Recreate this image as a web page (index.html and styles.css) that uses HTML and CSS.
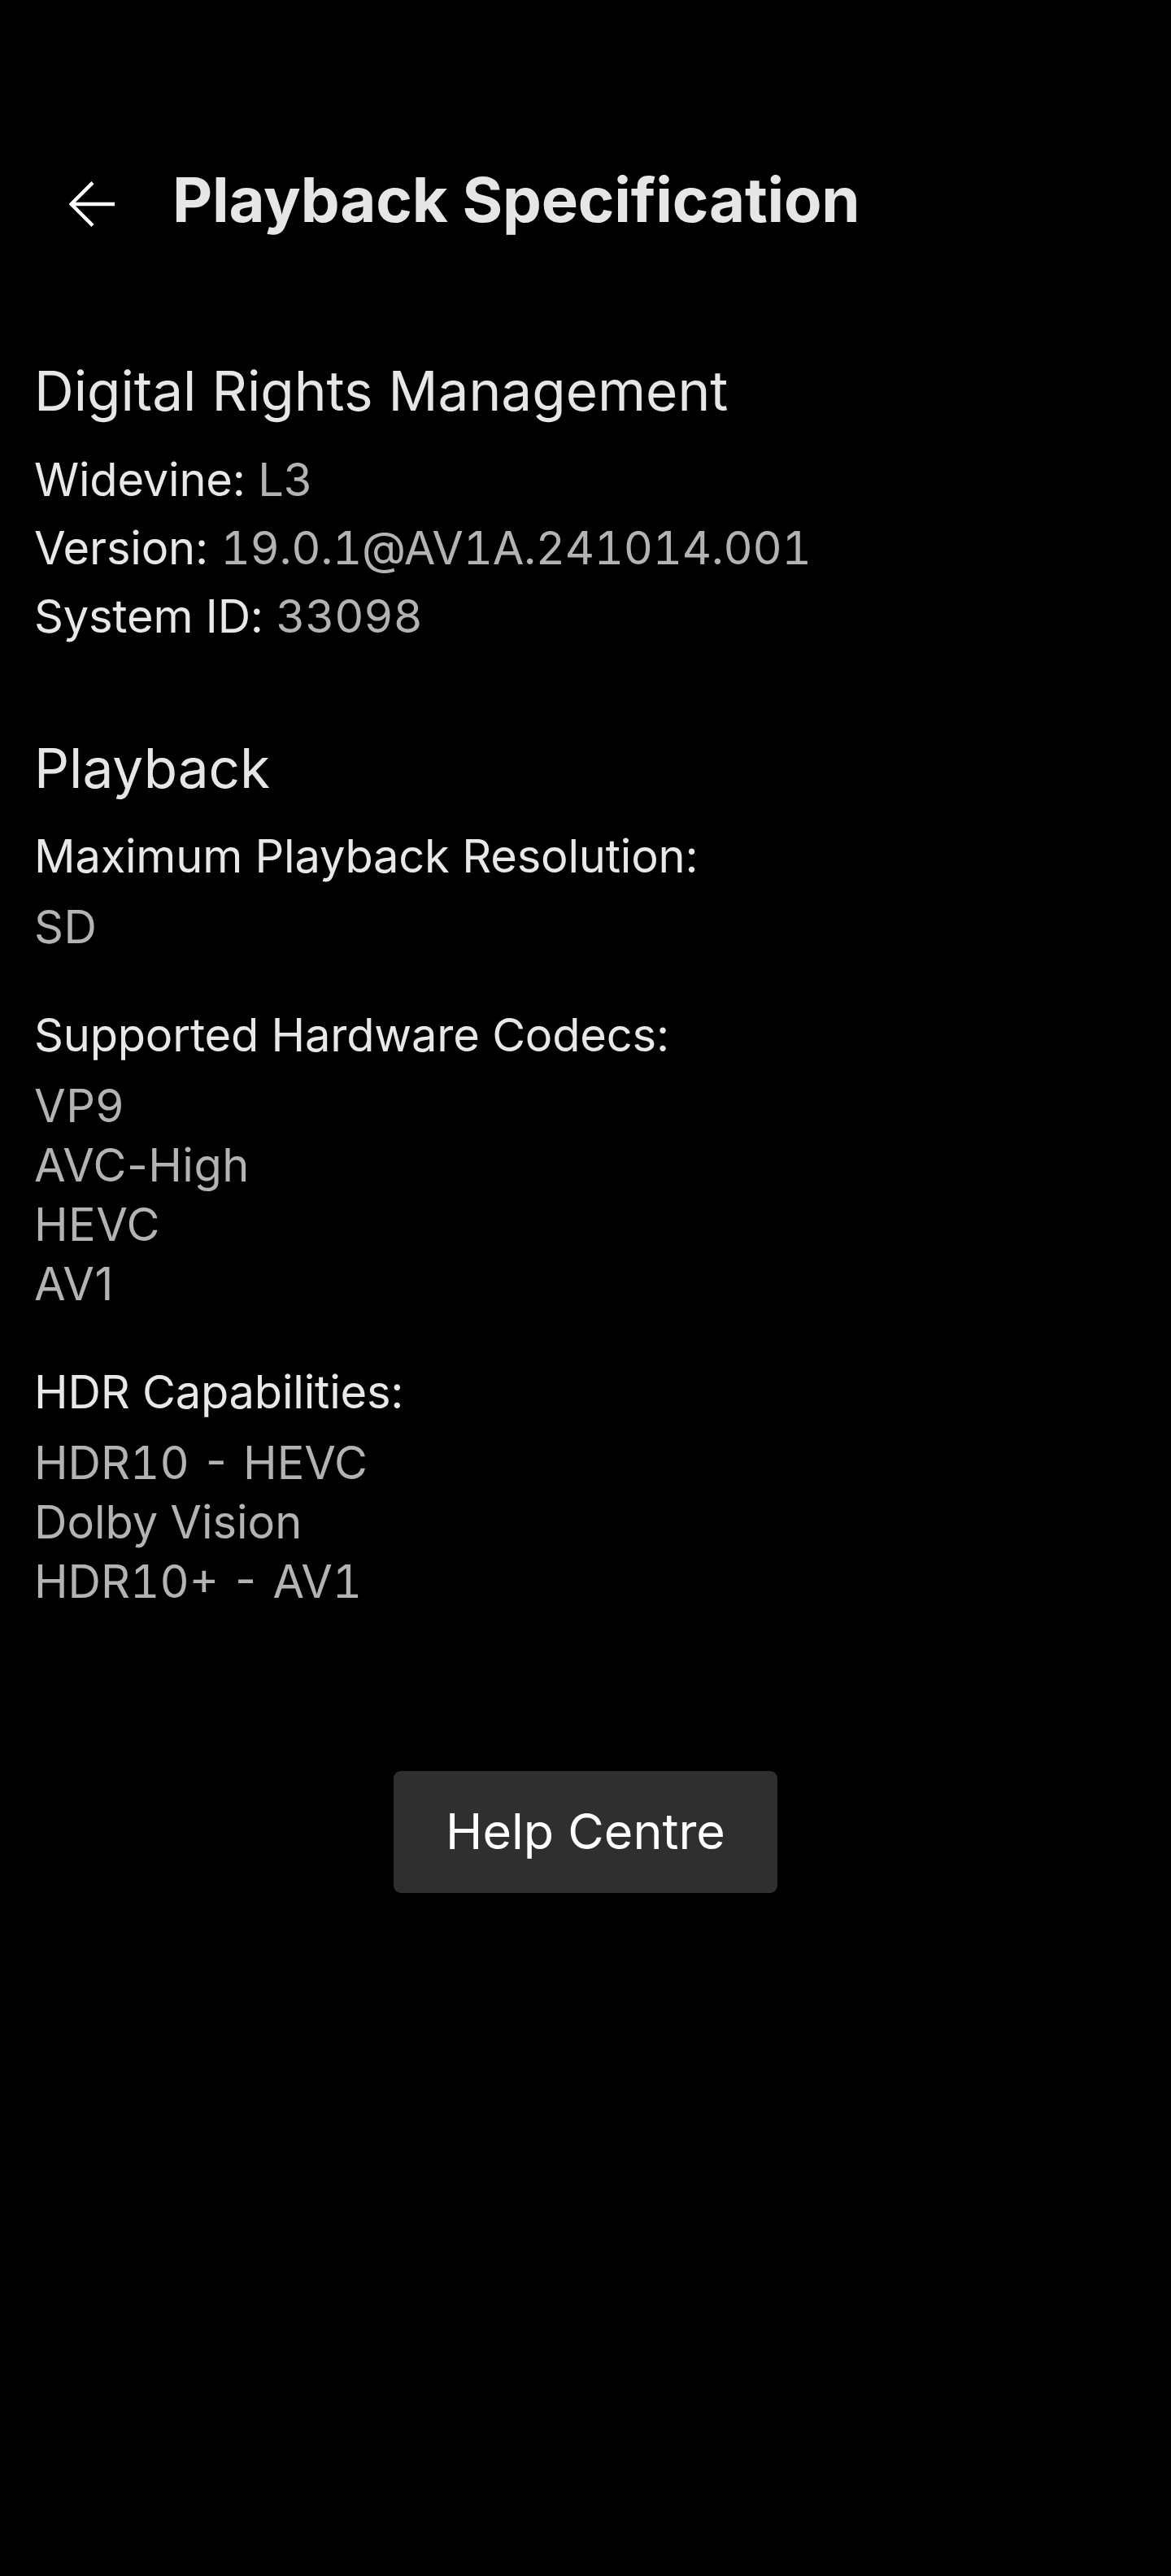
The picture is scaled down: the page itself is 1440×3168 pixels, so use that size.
FILE: index.html
```html
<!DOCTYPE html>
<html>
<head>
    <title>Playback Specification</title>
    <link rel="stylesheet" href="styles.css">
</head>
<body>
    <div class="toolbar">
        <span class="back-icon">
            <svg width="56" height="56" viewBox="0 0 56 56">
                <path d="M29 1.6 L2.6 28 L29 54.4 M3 28 H56" fill="none" stroke="#ffffff" stroke-width="4.4"/>
            </svg>
        </span>
        <h1 class="toolbar-title">Playback Specification</h1>
    </div>

    <div class="content">
        <div class="spec-section">
            <h2 class="section-title">Digital Rights Management</h2>
            <div class="spec-line">Widevine: <span class="spec-value">L3</span></div>
            <div class="spec-line">Version: <span class="spec-value">19.0.1@AV1A.241014.001</span></div>
            <div class="spec-line">System ID: <span class="spec-value">33098</span></div>
        </div>

        <div class="spec-section playback-section">
            <h2 class="section-title">Playback</h2>
            <div class="spec-group">
                <div class="spec-label">Maximum Playback Resolution:</div>
                <div class="spec-values">
                    <div>SD</div>
                </div>
            </div>
            <div class="spec-group">
                <div class="spec-label">Supported Hardware Codecs:</div>
                <div class="spec-values">
                    <div>VP9</div>
                    <div>AVC-High</div>
                    <div>HEVC</div>
                    <div>AV1</div>
                </div>
            </div>
            <div class="spec-group">
                <div class="spec-label">HDR Capabilities:</div>
                <div class="spec-values hdr-values">
                    <div>HDR10 - HEVC</div>
                    <div>Dolby Vision</div>
                    <div>HDR10+ - AV1</div>
                </div>
            </div>
        </div>

        <div class="help-row">
            <button class="help-button">Help Centre</button>
        </div>
    </div>
</body>
</html>
```

FILE: styles.css
```css
html {
    background-color: #000000;
}

body {
    margin: 0;
    min-height: 3168px;
    background-color: #000000;
    color: #e5e5e5;
    font-family: Inter, "Noto Sans", sans-serif;
}

.toolbar {
    display: flex;
    align-items: flex-start;
    margin-top: 195px;
    padding-left: 85px;
    height: 100px;
}

.back-icon {
    display: block;
    width: 56px;
    height: 56px;
    margin-top: 28px;
}

.back-icon svg {
    display: block;
}

.toolbar-title {
    margin: 0 0 0 71px;
    font-size: 76px;
    line-height: 100px;
    font-weight: 700;
    letter-spacing: -0.2px;
    color: #e6e6e6;
}

.content {
    padding-left: 42px;
}

.spec-section {
    margin-top: 146px;
}

.playback-section {
    margin-top: 105px;
}

.section-title {
    margin: 0 0 27px;
    font-size: 67.5px;
    line-height: 80px;
    font-weight: 400;
    color: #e6e6e6;
}

.spec-line,
.spec-label {
    font-size: 56px;
    line-height: 84px;
    letter-spacing: -0.2px;
    color: #e8e8e8;
}

.spec-value,
.spec-values {
    color: #b3b3b3;
}

.spec-value {
    font-variant-numeric: tabular-nums;
    letter-spacing: -0.3px;
}

.spec-group {
    margin-top: 54px;
}

.playback-section .section-title {
    margin-bottom: 26px;
}

.playback-section .spec-group:first-of-type {
    margin-top: 0;
}

.spec-values {
    margin-top: 9px;
    font-size: 56px;
    line-height: 73px;
    letter-spacing: 0.5px;
}

.hdr-values {
    font-variant-numeric: tabular-nums;
    letter-spacing: 0;
}

.help-row {
    display: flex;
    justify-content: center;
    margin-top: 196px;
    margin-left: -42px;
}

.help-button {
    width: 472px;
    height: 150px;
    padding: 0 0 2px;
    background-color: #2f2f2f;
    color: #ffffff;
    border: none;
    border-radius: 9px;
    font-family: Inter, "Noto Sans", sans-serif;
    font-size: 61px;
    cursor: pointer;
}
```
